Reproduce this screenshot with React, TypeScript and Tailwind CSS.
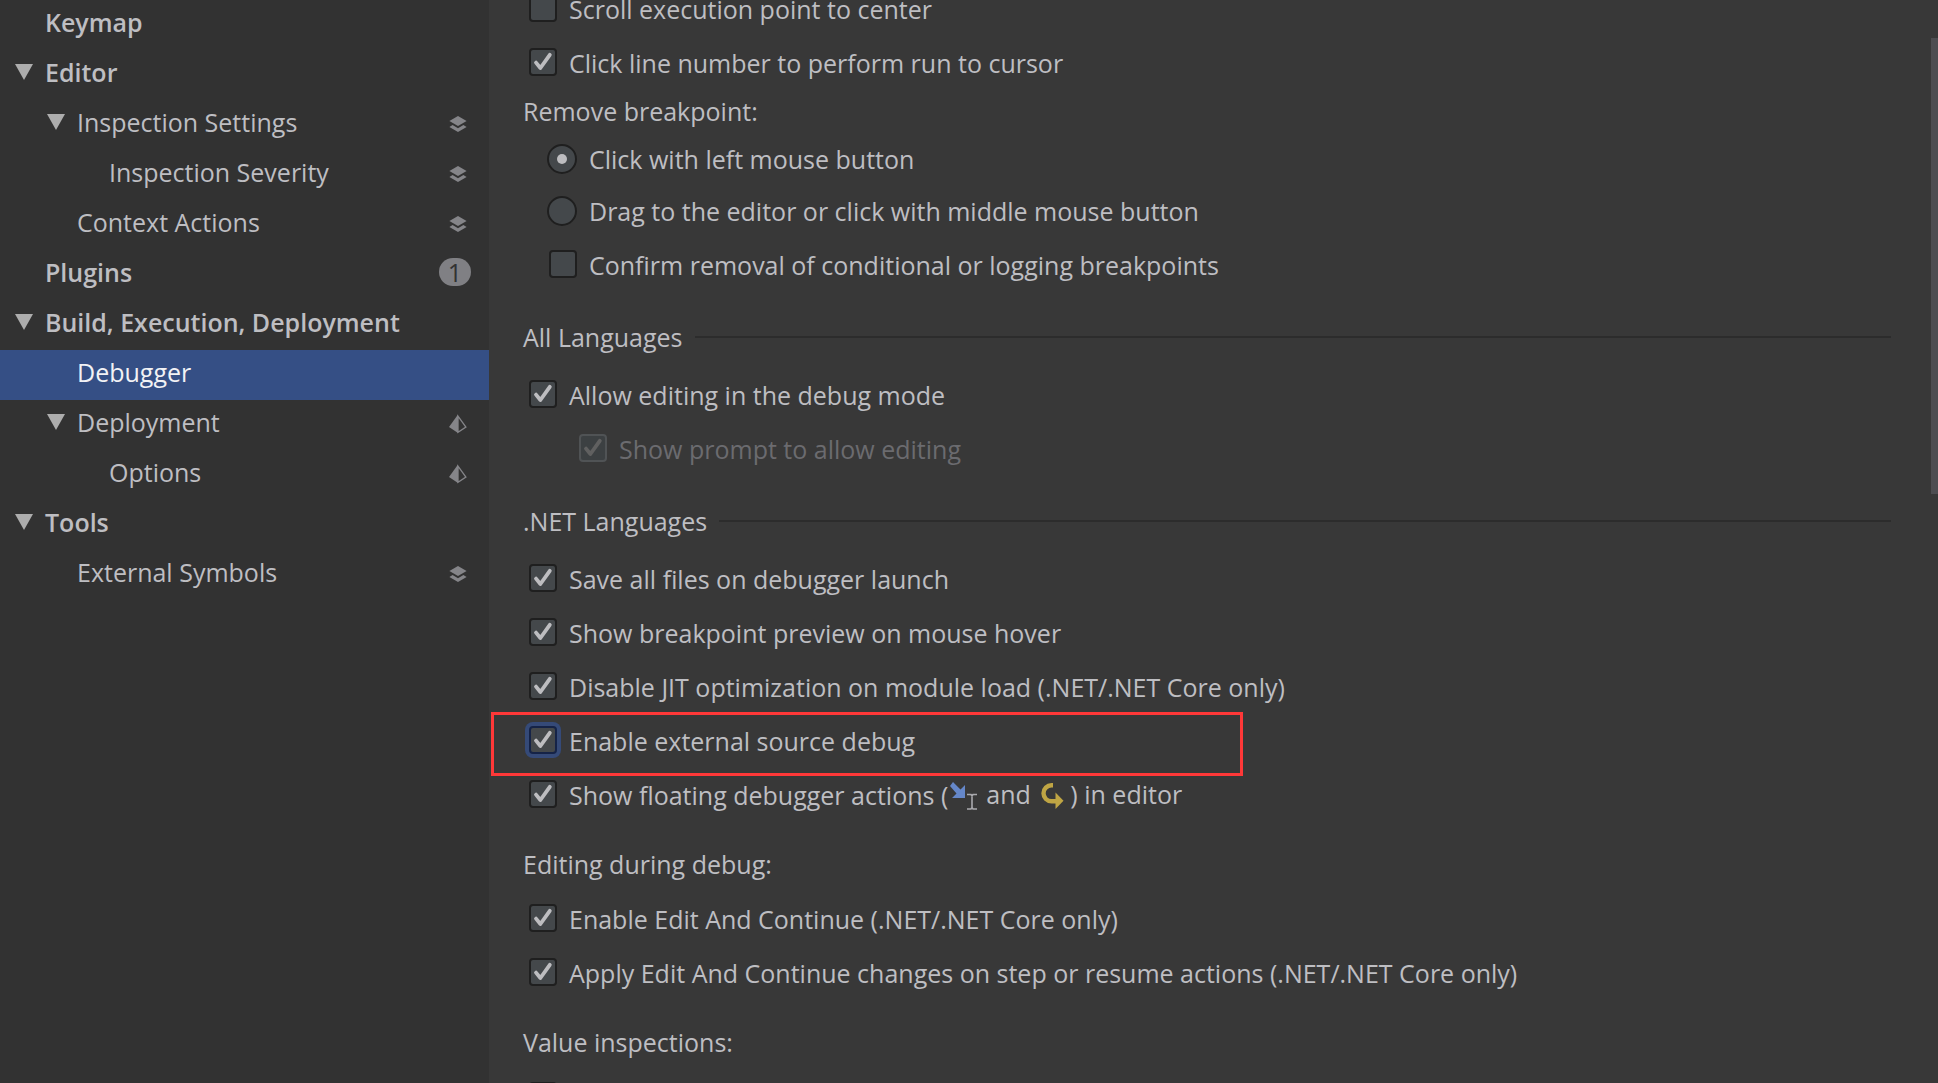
import type { ReactNode } from "react";

type TreeItem = {
  label: string;
  level: 0 | 1 | 2;
  bold?: boolean;
  open?: boolean;
  selected?: boolean;
  mark?: "layers" | "project" | "badge";
};

const tree: TreeItem[] = [
  { label: "Keymap", level: 0, bold: true },
  { label: "Editor", level: 0, bold: true, open: true },
  { label: "Inspection Settings", level: 1, open: true, mark: "layers" },
  { label: "Inspection Severity", level: 2, mark: "layers" },
  { label: "Context Actions", level: 1, mark: "layers" },
  { label: "Plugins", level: 0, bold: true, mark: "badge" },
  { label: "Build, Execution, Deployment", level: 0, bold: true, open: true },
  { label: "Debugger", level: 1, selected: true },
  { label: "Deployment", level: 1, open: true, mark: "project" },
  { label: "Options", level: 2, mark: "project" },
  { label: "Tools", level: 0, bold: true, open: true },
  { label: "External Symbols", level: 1, mark: "layers" },
];

const indents = ["pl-[15px]", "pl-[47px]", "pl-[79px]"];

function LayersIcon() {
  return (
    <svg className="mr-[22px] h-[18px] w-[18px] shrink-0" viewBox="0 0 18 18" fill="#858589" aria-hidden="true">
      <path d="M9 1 17.6 6 9 11 .4 6z" />
      <path d="M.4 12 3.6 10.1 9 13.2 14.4 10.1 17.6 12 9 17z" />
    </svg>
  );
}

function ProjectIcon() {
  return (
    <svg className="mr-[22px] h-5 w-[18px] shrink-0" viewBox="0 0 18 20" aria-hidden="true">
      <path d="M9 .5V19L0 13z" fill="#858589" />
      <path d="M9 2.2 16.9 13 9 18.2z" fill="none" stroke="#858589" strokeWidth="1.3" />
    </svg>
  );
}

function TreeRow({ item }: { item: TreeItem }) {
  return (
    <li>
      <button
        type="button"
        className={`flex h-[50px] w-full items-center pb-[2px] text-left ${indents[item.level]} ${
          item.selected ? "bg-[#354f85] text-[#f2f2f5]" : ""
        } ${item.bold ? "font-semibold" : ""}`}
      >
        <span className="mr-3 w-[18px] shrink-0">
          {item.open && (
            <svg className="mb-1 h-4 w-[18px]" viewBox="0 0 18 16" fill="#adadad" aria-hidden="true">
              <path d="M0 0H18L9 16z" />
            </svg>
          )}
        </span>
        <span className="grow whitespace-nowrap pb-1">{item.label}</span>
        {item.mark === "layers" && <LayersIcon />}
        {item.mark === "project" && <ProjectIcon />}
        {item.mark === "badge" && (
          <span className="mb-1 mr-[18px] flex h-7 w-8 shrink-0 items-center justify-center rounded-full bg-[#808084] font-normal text-[#323232]">
            1
          </span>
        )}
      </button>
    </li>
  );
}

type OptionProps = {
  children?: ReactNode;
  checked?: boolean;
  disabled?: boolean;
  focused?: boolean;
  className?: string;
  ariaLabel?: string;
};

function CheckRow({ children, checked, disabled, focused, className = "pl-[6px]", ariaLabel }: OptionProps) {
  return (
    <label className={`flex h-[54px] items-center gap-3 whitespace-nowrap ${className} ${disabled ? "text-[#6b6b6f]" : ""}`}>
      <span className="grid h-7 w-7 shrink-0">
        <input
          type="checkbox"
          aria-label={ariaLabel}
          defaultChecked={checked}
          disabled={disabled}
          className={`col-start-1 row-start-1 h-7 w-7 appearance-none rounded-[4px] border-2 ${
            disabled
              ? "border-[#505355] bg-[#3c4042]"
              : focused
                ? "border-[#152347] bg-[#44484b] ring-4 ring-[#354a78]"
                : "border-[#1f1f1f] bg-[#44484b]"
          }`}
        />
        {checked && (
          <svg className="pointer-events-none col-start-1 row-start-1 h-7 w-7" viewBox="0 0 28 28" fill="none" aria-hidden="true">
            <path
              d="M7 14.6 11.4 20 20.8 6.8"
              stroke={disabled ? "#606060" : "#bdbdc0"}
              strokeWidth="3.8"
              strokeLinecap="round"
              strokeLinejoin="round"
            />
          </svg>
        )}
      </span>
      <span className="pt-[2px]">{children}</span>
    </label>
  );
}

function RadioRow({ children, checked }: OptionProps) {
  return (
    <label className="flex h-[52px] items-center gap-3 whitespace-nowrap pl-6">
      <span className="grid h-[30px] w-[30px] shrink-0 place-items-center">
        <input
          type="radio"
          name="remove-breakpoint"
          defaultChecked={checked}
          className="peer col-start-1 row-start-1 h-[30px] w-[30px] appearance-none rounded-full border-2 border-[#1f1f1f] bg-[#44484b]"
        />
        <span className="pointer-events-none col-start-1 row-start-1 hidden h-[10px] w-[10px] rounded-full bg-[#bdbdc0] peer-checked:block" />
      </span>
      <span>{children}</span>
    </label>
  );
}

function SectionTitle({ children }: { children: ReactNode }) {
  return (
    <h2 className="mt-[14px] flex h-[62px] items-center gap-3 whitespace-nowrap pt-[2px]">
      {children}
      <span className="h-[2px] grow bg-[#2c2c2c]" />
    </h2>
  );
}

function StepIntoCursorIcon() {
  return (
    <svg className="ml-[2px] inline-block h-7 w-7 align-[-5px]" viewBox="0 0 28 28" aria-hidden="true">
      <path d="M3 0 10.5 7.5 15 3V16H2L6.5 11.5 0 4z" fill="#6587c9" />
      <path d="M17 12.5H21L22 14 23 12.5H27M22 13.5V26M17 27H21L22 25.5 23 27H27" fill="none" stroke="#a9a9ad" strokeWidth="1.6" />
    </svg>
  );
}

function StepOverIcon() {
  return (
    <svg className="inline-block h-[26px] w-[23px] align-[-5px]" viewBox="0 0 23 26" aria-hidden="true">
      <path d="M12 2.3H10.5A8 8 0 0 0 10.5 18.3H15" fill="none" stroke="#bfa544" strokeWidth="4.4" />
      <path d="M14.5 9.5 22.5 17.8 14.5 26z" fill="#bfa544" />
    </svg>
  );
}

export default function App() {
  return (
    <div className="flex h-screen overflow-hidden bg-[#383838] font-['Open_Sans','Noto_Sans',sans-serif] text-[25px] leading-9 text-[#bebec2]">
      <nav aria-label="Settings" className="w-[489px] shrink-0 overflow-hidden bg-[#323232]">
        <ul>
          {tree.map((item) => (
            <TreeRow key={item.label} item={item} />
          ))}
        </ul>
      </nav>

      <main className="min-w-0 grow overflow-hidden pl-[34px] pr-10">
        <div className="-mt-[19px]">
          <CheckRow>Scroll execution point to center</CheckRow>
          <CheckRow checked>Click line number to perform run to cursor</CheckRow>

          <fieldset>
            <legend className="flex h-11 items-center">Remove breakpoint:</legend>
            <RadioRow checked>Click with left mouse button</RadioRow>
            <RadioRow>Drag to the editor or click with middle mouse button</RadioRow>
            <CheckRow className="pl-[26px]">Confirm removal of conditional or logging breakpoints</CheckRow>
          </fieldset>

          <SectionTitle>All Languages</SectionTitle>
          <CheckRow checked>Allow editing in the debug mode</CheckRow>
          <CheckRow checked disabled className="pl-14">
            Show prompt to allow editing
          </CheckRow>

          <SectionTitle>.NET Languages</SectionTitle>
          <CheckRow checked>Save all files on debugger launch</CheckRow>
          <CheckRow checked>Show breakpoint preview on mouse hover</CheckRow>
          <CheckRow checked>Disable JIT optimization on module load (.NET/.NET Core only)</CheckRow>
          <div className="relative">
            <CheckRow checked focused>
              Enable external source debug
            </CheckRow>
            <div className="pointer-events-none absolute -left-8 -top-px h-16 w-[752px] border-3 border-[#ff3838]" />
          </div>
          <CheckRow checked>
            <span className="flex items-center">
              <span>
                Show floating debugger actions (<StepIntoCursorIcon />
              </span>
              <span className="ml-2 pb-[2px]">
                <span className="mr-[10px]">and</span>
                <StepOverIcon /> ) in editor
              </span>
            </span>
          </CheckRow>

          <h3 className="mt-4 flex h-[54px] items-center">Editing during debug:</h3>
          <CheckRow checked>Enable Edit And Continue (.NET/.NET Core only)</CheckRow>
          <CheckRow checked>Apply Edit And Continue changes on step or resume actions (.NET/.NET Core only)</CheckRow>

          <h3 className="mt-4 flex h-[54px] items-center">Value inspections:</h3>
          <CheckRow ariaLabel="Value inspections" />
        </div>
      </main>

      <div className="mt-[38px] h-[456px] w-[7px] shrink-0 bg-[#4d4d51]" />
    </div>
  );
}
